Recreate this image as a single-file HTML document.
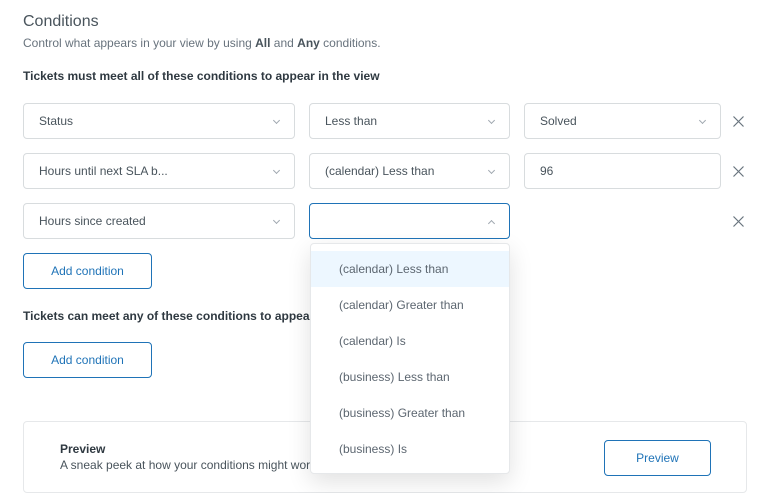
<html><head><style>
body{margin:0;width:768px;height:475px;overflow:hidden;background:#fff;font-family:"Liberation Sans",sans-serif;color:#2f3941;position:relative}
.a{position:absolute}
.box{position:absolute;height:34px;border:1px solid #d8dcde;border-radius:4px;font-size:12px;line-height:34px;padding-left:15px;box-sizing:content-box;background:#fff;color:#49545c}
.chev{position:absolute;right:15px;top:14px;width:4px;height:4px;border-right:1px solid #a0a8b0;border-bottom:1px solid #a0a8b0;transform:rotate(45deg)}
.x{position:absolute;left:733px;width:11px;height:11px}
.btn{position:absolute;border:1px solid #1f73b7;border-radius:4px;color:#1f73b7;font-size:12px;text-align:center;line-height:34px;background:#fff}
.dd{position:absolute;left:310px;top:243px;width:198px;height:229px;background:#fff;border:1px solid #e6e8ea;border-radius:4px;box-shadow:0 8px 24px rgba(0,0,0,.12)}
.it{height:36px;line-height:36px;padding-left:28px;font-size:12px;color:#5c6670}
</style></head><body>
<div class="a" style="left:23px;top:13px;font-size:16px;color:#49545c">Conditions</div>
<div class="a" style="left:23px;top:36px;font-size:12px;color:#68737d">Control what appears in your view by using <b style="color:#49545c">All</b> and <b style="color:#49545c">Any</b> conditions.</div>
<div class="a" style="left:23px;top:69px;font-size:12px;font-weight:bold">Tickets must meet all of these conditions to appear in the view</div>

<div class="box" style="left:23px;top:103px;width:255px">Status<i class="chev"></i></div>
<div class="box" style="left:309px;top:103px;width:184px">Less than<i class="chev"></i></div>
<div class="box" style="left:524px;top:103px;width:180px">Solved<i class="chev"></i></div>
<svg class="x" style="top:116px" viewBox="0 0 11 11"><path d="M0.5 0.5L10.5 10.5M10.5 0.5L0.5 10.5" stroke="#68737d" stroke-width="1.2"/></svg>

<div class="box" style="left:23px;top:153px;width:255px">Hours until next SLA b...<i class="chev"></i></div>
<div class="box" style="left:309px;top:153px;width:184px">(calendar) Less than<i class="chev"></i></div>
<div class="box" style="left:524px;top:153px;width:180px">96</div>
<svg class="x" style="top:166px" viewBox="0 0 11 11"><path d="M0.5 0.5L10.5 10.5M10.5 0.5L0.5 10.5" stroke="#68737d" stroke-width="1.2"/></svg>

<div class="box" style="left:23px;top:203px;width:255px">Hours since created<i class="chev"></i></div>
<div class="box" style="left:309px;top:203px;width:184px;border-color:#1f73b7"><i class="chev" style="transform:rotate(225deg);top:17px"></i></div>
<svg class="x" style="top:216px" viewBox="0 0 11 11"><path d="M0.5 0.5L10.5 10.5M10.5 0.5L0.5 10.5" stroke="#68737d" stroke-width="1.2"/></svg>

<div class="btn" style="left:23px;top:253px;width:127px">Add condition</div>
<div class="a" style="left:23px;top:309px;font-size:12px;font-weight:bold">Tickets can meet any of these conditions to appear in the view</div>
<div class="btn" style="left:23px;top:342px;width:127px">Add condition</div>

<div class="a" style="left:23px;top:421px;width:722px;height:70px;border:1px solid #e6e8ea;border-radius:4px"></div>
<div class="a" style="left:60px;top:442px;font-size:12px;font-weight:bold">Preview</div>
<div class="a" style="left:60px;top:458px;font-size:12px;color:#49545c">A sneak peek at how your conditions might work</div>
<div class="btn" style="left:604px;top:440px;width:105px">Preview</div>

<div class="dd">
<div style="height:7px"></div>
<div class="it" style="background:#edf7ff">(calendar) Less than</div>
<div class="it">(calendar) Greater than</div>
<div class="it">(calendar) Is</div>
<div class="it">(business) Less than</div>
<div class="it">(business) Greater than</div>
<div class="it">(business) Is</div>
</div>
</body></html>
